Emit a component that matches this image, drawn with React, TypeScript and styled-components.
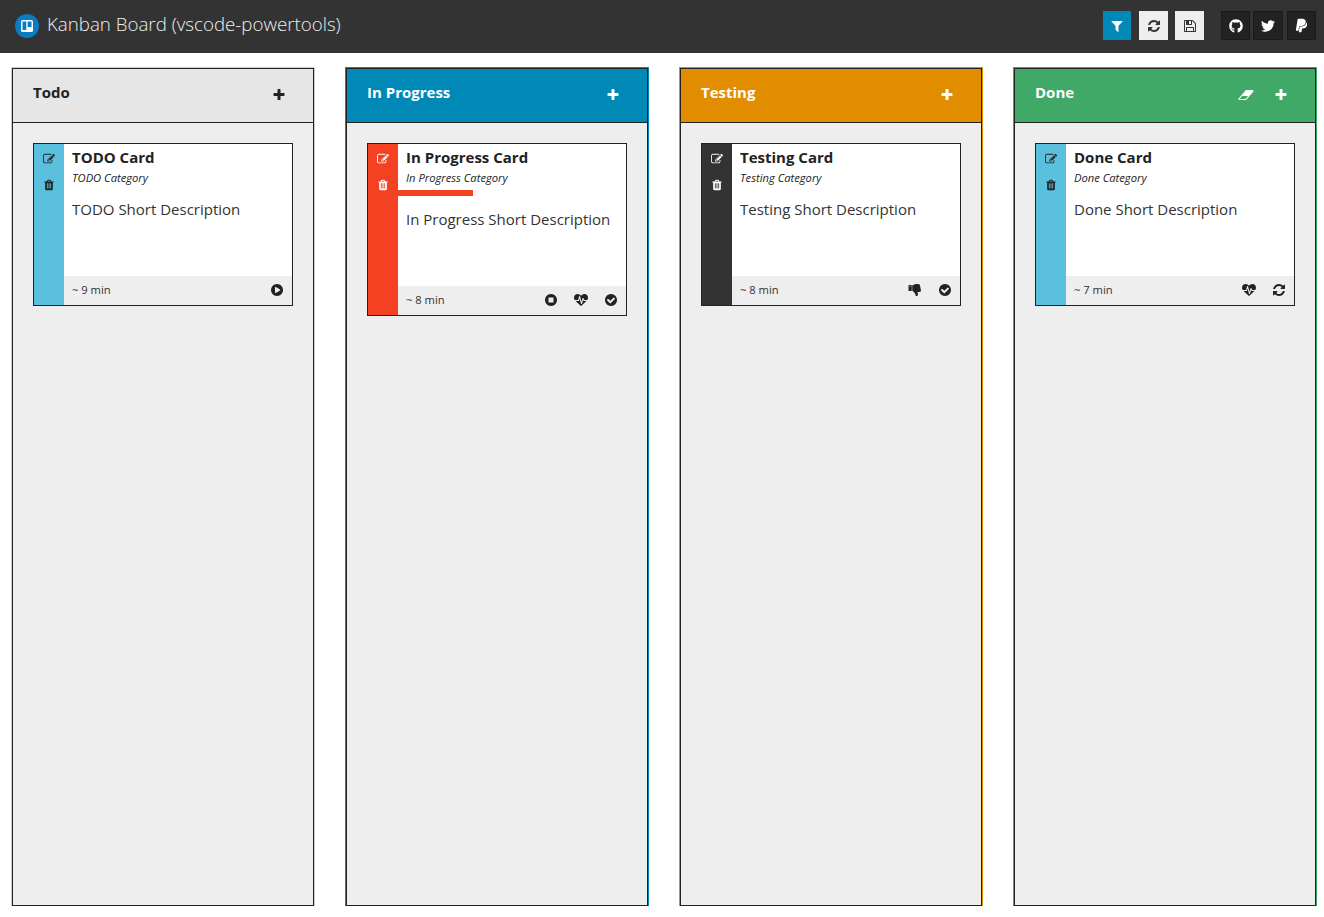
import styled, { createGlobalStyle } from "styled-components";
import { FaGithub, FaPaypal, FaTwitter } from "react-icons/fa";

const glyphs = {
  plus: "M1600 736v192q0 40-28 68t-68 28h-416v416q0 40-28 68t-68 28h-192q-40 0-68-28t-28-68v-416h-416q-40 0-68-28t-28-68v-192q0-40 28-68t68-28h416v-416q0-40 28-68t68-28h192q40 0 68 28t28 68v416h416q40 0 68 28t28 68z",
  trash: "M704 1376v-704q0-14-9-23t-23-9h-64q-14 0-23 9t-9 23v704q0 14 9 23t23 9h64q14 0 23-9t9-23zm256 0v-704q0-14-9-23t-23-9h-64q-14 0-23 9t-9 23v704q0 14 9 23t23 9h64q14 0 23-9t9-23zm256 0v-704q0-14-9-23t-23-9h-64q-14 0-23 9t-9 23v704q0 14 9 23t23 9h64q14 0 23-9t9-23zm-544-992h448l-48-117q-7-9-17-11h-317q-10 2-17 11zm928 32v64q0 14-9 23t-23 9h-96v948q0 83-47 143.5t-113 60.5h-832q-66 0-113-58.5t-47-141.5v-952h-96q-14 0-23-9t-9-23v-64q0-14 9-23t23-9h309l70-167q15-37 54-63t79-26h320q40 0 79 26t54 63l70 167h309q14 0 23 9t9 23z",
  edit: "M888 1184l116-116-152-152-116 116v56h96v96h56zm440-720q-16-16-33 1l-350 350q-17 17-1 33t33-1l350-350q17-17 1-33zm80 594v190q0 119-84.5 203.5t-203.5 84.5h-832q-119 0-203.5-84.5t-84.5-203.5v-832q0-119 84.5-203.5t203.5-84.5h832q63 0 117 25 15 7 18 23 3 17-9 29l-49 49q-14 14-32 8-23-6-45-6h-832q-66 0-113 47t-47 113v832q0 66 47 113t113 47h832q66 0 113-47t47-113v-126q0-13 9-22l64-64q15-15 35-9t20 22zm-96-738l288 288-672 672h-288v-288zm444 132l-92 92-288-288 92-92q28-28 68-28t68 28l152 152q28 28 28 68t-28 68z",
  refresh: "M1639 1056q0 5-1 7-64 268-268 434.5t-478 166.5q-146 0-282.5-55t-243.5-157l-129 129q-19 19-45 19t-45-19-19-45v-448q0-26 19-45t45-19h448q26 0 45 19t19 45-19 45l-137 137q71 66 161 102t187 36q134 0 250-65t186-179q11-17 53-117 8-23 30-23h192q13 0 22.5 9.5t9.5 22.5zm25-800v448q0 26-19 45t-45 19h-448q-26 0-45-19t-19-45 19-45l138-138q-148-137-349-137-134 0-250 65t-186 179q-11 17-53 117-8 23-30 23h-199q-13 0-22.5-9.5t-9.5-22.5v-7q65-268 270-434.5t480-166.5q146 0 284 55.5t245 156.5l130-129q19-19 45-19t45 19 19 45z",
  save: "M512 1536h768v-384h-768v384zm896 0h128v-896q0-14-10-38.5t-20-34.5l-281-281q-10-10-34-20t-39-10v416q0 40-28 68t-68 28h-576q-40 0-68-28t-28-68v-416h-128v1280h128v-416q0-40 28-68t68-28h832q40 0 68 28t28 68v416zm-384-928v-320q0-13-9.5-22.5t-22.5-9.5h-192q-13 0-22.5 9.5t-9.5 22.5v320q0 13 9.5 22.5t22.5 9.5h192q13 0 22.5-9.5t9.5-22.5zm640 32v928q0 40-28 68t-68 28h-1344q-40 0-68-28t-28-68v-1344q0-40 28-68t68-28h928q40 0 88 20t76 48l280 280q28 28 48 76t20 88z",
  filter: "M1595 295q17 41-14 70l-493 493v742q0 42-39 59-13 5-25 5-27 0-45-19l-256-256q-19-19-19-45v-486l-493-493q-31-29-14-70 17-39 59-39h1280q42 0 59 39z",
  heartbeat: "M1280 1024h305q-5 6-10 10.5t-9 7.5l-3 4-623 600q-18 18-44 18t-44-18l-624-602q-5-2-21-20h369q22 0 39.5-13.5t22.5-34.5l70-281 190 667q6 20 23 33t39 13q21 0 38-13t23-33l146-485 56 112q18 35 57 35zm512-428q0 145-103 300h-369l-111-221q-8-17-25.5-27t-36.5-8q-45 5-56 46l-129 430-196-686q-6-20-23.5-33t-39.5-13-39 13.5-22 34.5l-116 464h-423q-103-155-103-300 0-220 127-344t351-124q62 0 126.5 21.5t120 58 95.5 68.5 76 68q36-36 76-68t95.5-68.5 120-58 126.5-21.5q224 0 351 124t127 344z",
  check: "M1412 734q0-28-18-46l-91-90q-19-19-45-19t-45 19l-408 407-226-226q-19-19-45-19t-45 19l-91 90q-18 18-18 46 0 27 18 45l362 362q19 19 45 19 27 0 46-19l543-543q18-18 18-45zm252 162q0 209-103 385.5t-279.5 279.5-385.5 103-385.5-103-279.5-279.5-103-385.5 103-385.5 279.5-279.5 385.5-103 385.5 103 279.5 279.5 103 385.5z",
  stop: "M1216 1184v-576q0-14-9-23t-23-9h-576q-14 0-23 9t-9 23v576q0 14 9 23t23 9h576q14 0 23-9t9-23zm448-288q0 209-103 385.5t-279.5 279.5-385.5 103-385.5-103-279.5-279.5-103-385.5 103-385.5 279.5-279.5 385.5-103 385.5 103 279.5 279.5 103 385.5z",
  play: "M896 128q209 0 385.5 103t279.5 279.5 103 385.5-103 385.5-279.5 279.5-385.5 103-385.5-103-279.5-279.5-103-385.5 103-385.5 279.5-279.5 385.5-103zm384 823q32-18 32-55t-32-55l-544-320q-31-19-64-1-32 19-32 56v640q0 37 32 56 16 8 32 8 17 0 32-9z",
  // thumbs up path, flipped by the svg for the thumbs down
  thumb: "M320 1344q0-26-19-45t-45-19-45 19-19 45 19 45 45 19 45-19 19-45zm160-512v640q0 26-19 45t-45 19h-288q-26 0-45-19t-19-45v-640q0-26 19-45t45-19h288q26 0 45 19t19 45zm1184 0q0 86-55 149 15 44 15 76 3 76-43 137 17 56 0 117-15 57-54 94 9 112-49 181-64 76-197 78h-129q-66 0-144-15.5t-121.5-29-120.5-39.5q-123-43-158-44-26-1-45-19.5t-19-44.5v-641q0-25 18-43.5t43-20.5q24-2 76-59t101-121q68-87 101-120 18-18 31-48t17.5-48.5 13.5-60.5q7-39 12.5-61t19.5-52 34-50q19-19 45-19 46 0 82.5 10.5t60 26 40 40.5 24 45 12 50 5 45 .5 39q0 38-9.5 76t-19 60-27.5 56q-3 6-10 18t-11 22-8 24h277q78 0 135 57t57 135z",
};

const GlobalStyle = createGlobalStyle`
  html, body {
    margin: 0;
    padding: 0;
    background: #fff;
    font-family: "Open Sans", "Liberation Sans", sans-serif;
    color: #222;
  }
`;

const GlyphSvg = styled.svg<{ $size: number; $flip?: boolean }>`
  width: ${(p) => p.$size}px;
  height: ${(p) => p.$size}px;
  display: block;
  fill: currentColor;
  ${(p) => p.$flip && "transform: scaleY(-1);"}
`;

function Glyph({ name, size, flip }: { name: keyof typeof glyphs; size: number; flip?: boolean }) {
  return (
    <GlyphSvg $size={size} $flip={flip} viewBox="0 0 1792 1792">
      <path d={glyphs[name]} />
    </GlyphSvg>
  );
}

const EraserSvg = styled.svg`
  width: 16px;
  height: 14px;
  display: block;
  fill: currentColor;
`;

const TopBar = styled.header`
  height: 53px;
  box-sizing: border-box;
  background: #333;
  display: flex;
  align-items: center;
  padding: 0 8px 2px 15px;
`;

const Logo = styled.svg`
  width: 24px;
  height: 24px;
  margin-right: 8px;
`;

const BoardTitle = styled.h1`
  flex: 1;
  margin: 0 0 3px;
  font-size: 18.72px;
  font-weight: 300;
  color: #eee;
  line-height: 24px;
`;

const ToolButton = styled.button<{ $kind: "active" | "light" | "dark"; $gap: number; $width?: number }>`
  width: ${(p) => p.$width ?? 29}px;
  height: 29px;
  margin-left: ${(p) => p.$gap}px;
  padding: 0;
  display: flex;
  align-items: center;
  justify-content: center;
  font-size: 14px;
  border: 1px solid ${(p) => (p.$kind === "dark" ? "#1a1a1a" : p.$kind === "active" ? "#0088b6" : "#eee")};
  background: ${(p) => (p.$kind === "dark" ? "#222" : p.$kind === "active" ? "#0088b6" : "#eee")};
  color: ${(p) => (p.$kind === "light" ? "#333" : "#fff")};
`;

const Board = styled.main`
  display: flex;
  gap: 32px;
  padding: 15px 0 0 12px;
`;

const Column = styled.section<{ $edge: string }>`
  width: 302px;
  height: 838px;
  box-sizing: border-box;
  border: 1px solid #222;
  box-shadow: 0 0 0 1px ${(p) => p.$edge};
  background: #eee;
`;

const ColumnHeader = styled.div<{ $bg: string; $fg: string }>`
  height: 54px;
  box-sizing: border-box;
  border-bottom: 1px solid #222;
  background: ${(p) => p.$bg};
  color: ${(p) => p.$fg};
  display: flex;
  padding: 13px 27px 0 20px;
`;

const ColumnTitle = styled.div`
  flex: 1;
  font-size: 15px;
  font-weight: 700;
  line-height: 20px;
`;

const HeaderIcon = styled.span`
  width: 34px;
  height: 24px;
  margin-top: 1px;
  display: flex;
  align-items: center;
  justify-content: flex-end;
`;

const ColumnBody = styled.div`
  padding: 20px;
`;

const Card = styled.article`
  width: 260px;
  box-sizing: border-box;
  border: 1px solid #222;
  background: #fff;
  display: flex;
`;

const Stripe = styled.div<{ $bg: string; $fg: string }>`
  width: 30px;
  flex: none;
  background: ${(p) => p.$bg};
  color: ${(p) => p.$fg};
  display: flex;
  flex-direction: column;
  align-items: center;
  padding-top: 9px;
  gap: 14px;
`;

const CardMain = styled.div`
  flex: 1;
  min-width: 0;
  display: flex;
  flex-direction: column;
`;

const CardBody = styled.div<{ $tall: boolean }>`
  height: ${(p) => (p.$tall ? 142 : 132)}px;
  position: relative;
`;

const CardText = styled.div`
  padding: 3px 8px 0;
`;

const CardTitle = styled.div`
  font-size: 15px;
  font-weight: 700;
  line-height: 21px;
`;

const CardCategory = styled.div`
  font-size: 11.2px;
  font-style: italic;
  line-height: 14px;
  margin-top: 3px;
`;

const CardDescription = styled.div<{ $tall: boolean }>`
  font-size: 15px;
  line-height: 20px;
  margin-top: ${(p) => (p.$tall ? 24 : 14)}px;
  color: #333;
`;

const Progress = styled.div<{ $bg: string; $width: number }>`
  position: absolute;
  left: 0;
  top: 46px;
  height: 6px;
  width: ${(p) => p.$width}px;
  background: ${(p) => p.$bg};
`;

const CardFooter = styled.div`
  height: 29px;
  box-sizing: border-box;
  background: #eee;
  display: flex;
  align-items: center;
  padding: 0 8px 2px 8px;
  font-size: 11.2px;
  color: #333;
`;

const FooterTime = styled.span`
  flex: 1;
`;

const FooterIcon = styled.span`
  width: 14px;
  display: flex;
  justify-content: center;
  margin-left: 16px;
  color: #222;
`;

type ColumnData = {
  title: string;
  edge: string;
  headerBg: string;
  headerFg: string;
  stripeBg: string;
  stripeFg: string;
  name: string;
  time: string;
  progress?: number;
  footer: (keyof typeof glyphs)[];
  erase?: boolean;
};

const columns: ColumnData[] = [
  {
    title: "Todo",
    edge: "#ccc",
    headerBg: "#e6e6e6",
    headerFg: "#222",
    stripeBg: "#5bc0de",
    stripeFg: "#222",
    name: "TODO",
    time: "~ 9 min",
    footer: ["play"],
  },
  {
    title: "In Progress",
    edge: "#0088b6",
    headerBg: "#0088b6",
    headerFg: "#fff",
    stripeBg: "#f44122",
    stripeFg: "#fff",
    name: "In Progress",
    time: "~ 8 min",
    progress: 75,
    footer: ["stop", "heartbeat", "check"],
  },
  {
    title: "Testing",
    edge: "#e28c00",
    headerBg: "#e28c00",
    headerFg: "#fff",
    stripeBg: "#333",
    stripeFg: "#fff",
    name: "Testing",
    time: "~ 8 min",
    footer: ["thumb", "check"],
  },
  {
    title: "Done",
    edge: "#41a967",
    headerBg: "#41a967",
    headerFg: "#fff",
    stripeBg: "#5bc0de",
    stripeFg: "#222",
    name: "Done",
    time: "~ 7 min",
    erase: true,
    footer: ["heartbeat", "refresh"],
  },
];

function App() {
  return (
    <>
      <GlobalStyle />
      <TopBar>
        <Logo viewBox="0 0 24 24">
          <circle cx="12" cy="12" r="12" fill="#0b7cc1" />
          <rect x="6" y="6" width="12" height="12" rx="1.5" fill="#fff" />
          <rect x="7.5" y="7.5" width="3.8" height="8.5" fill="#0b7cc1" />
          <rect x="12.7" y="7.5" width="3.8" height="5.5" fill="#0b7cc1" />
        </Logo>
        <BoardTitle>Kanban Board (vscode-powertools)</BoardTitle>
        <ToolButton $kind="active" $gap={0} $width={28}><Glyph name="filter" size={14} /></ToolButton>
        <ToolButton $kind="light" $gap={8}><Glyph name="refresh" size={14} /></ToolButton>
        <ToolButton $kind="light" $gap={7}><Glyph name="save" size={14} /></ToolButton>
        <ToolButton $kind="dark" $gap={17}><FaGithub /></ToolButton>
        <ToolButton $kind="dark" $gap={3} $width={30}><FaTwitter /></ToolButton>
        <ToolButton $kind="dark" $gap={4}><FaPaypal size={15} /></ToolButton>
      </TopBar>
      <Board>
        {columns.map((c) => (
          <Column key={c.title} $edge={c.edge}>
            <ColumnHeader $bg={c.headerBg} $fg={c.headerFg}>
              <ColumnTitle>{c.title}</ColumnTitle>
              {c.erase && (
                <HeaderIcon>
                  <EraserSvg viewBox="0 0 2048 1792">
                    <path d="M960 1408l336-384h-768l-336 384h768zm1013-1077q15 34 9.5 71.5t-30.5 65.5l-896 1024q-38 44-96 44h-768q-38 0-69.5-20.5t-47.5-54.5q-15-34-9.5-71.5t30.5-65.5l896-1024q38-44 96-44h768q38 0 70 20.5t47 54.5z" />
                  </EraserSvg>
                </HeaderIcon>
              )}
              <HeaderIcon><Glyph name="plus" size={14} /></HeaderIcon>
            </ColumnHeader>
            <ColumnBody>
              <Card>
                <Stripe $bg={c.stripeBg} $fg={c.stripeFg}>
                  <Glyph name="edit" size={12} />
                  <Glyph name="trash" size={12} />
                </Stripe>
                <CardMain>
                  <CardBody $tall={!!c.progress}>
                    <CardText>
                      <CardTitle>{c.name} Card</CardTitle>
                      <CardCategory>{c.name} Category</CardCategory>
                      <CardDescription $tall={!!c.progress}>{c.name} Short Description</CardDescription>
                    </CardText>
                    {c.progress && <Progress $bg={c.stripeBg} $width={c.progress} />}
                  </CardBody>
                  <CardFooter>
                    <FooterTime>{c.time}</FooterTime>
                    {c.footer.map((icon) => (
                      <FooterIcon key={icon}>
                        <Glyph name={icon} size={14} flip={icon === "thumb"} />
                      </FooterIcon>
                    ))}
                  </CardFooter>
                </CardMain>
              </Card>
            </ColumnBody>
          </Column>
        ))}
      </Board>
    </>
  );
}

export default App;
